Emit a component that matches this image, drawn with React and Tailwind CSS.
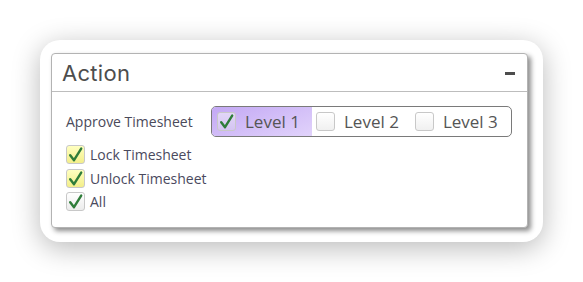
import React from "react";

function Check({ variant = "white" }) {
  const bg =
    variant === "yellow"
      ? "bg-[linear-gradient(180deg,#ffffc0,#f3ee8a)]"
      : variant === "purple"
      ? "bg-[linear-gradient(180deg,#e2d6f7,#d4c4f2)]"
      : "bg-[linear-gradient(180deg,#ffffff,#ececec)]";
  return (
    <span
      className={`relative inline-flex h-[19px] w-[19px] shrink-0 items-center justify-center rounded-[3px] border border-[#c8c8c8] ${bg}`}
    >
      <svg width="19" height="19" viewBox="0 0 19 19" className="absolute left-[-1px] top-[-1px]">
        <path d="M4.2 10.2 L8 15.2 L15.2 3.6" fill="none" stroke="#2f7d3a" strokeWidth="2.4" strokeLinecap="round" strokeLinejoin="round" />
      </svg>
    </span>
  );
}

function Empty() {
  return (
    <span className="inline-block h-[19px] w-[19px] shrink-0 rounded-[3px] border border-[#c8c8c8] bg-[linear-gradient(180deg,#ffffff,#f0f0f0)]" />
  );
}

export default function App() {
  return (
    <div className="h-[282px] w-[583px] bg-white pl-[40px] pt-[40px] font-['Open_Sans',sans-serif]">
      <div className="h-[202px] w-[503px] rounded-[20px] bg-white pb-[14px] pl-[11px] pr-[15px] pt-[13px] shadow-[0_6px_28px_rgba(0,0,0,0.28)]">
        <div className="h-[175px] w-[477px] rounded-[4px] border border-[#b3b3b3] bg-white shadow-[3px_3px_5px_rgba(0,0,0,0.45)]">
          <div className="flex h-[38px] items-center justify-between border-b border-[#bdbdbd] pl-[10px] pr-[12px]">
            <span className="font-['Inter',sans-serif] text-[22px] leading-none text-[#4d4d4d] tracking-[0.3px]">Action</span>
            <span className="mt-[1px] block h-[3px] w-[10px] bg-[#4d4d4d]" />
          </div>
          <div className="pl-[14px] pt-[14px]">
            <div className="flex items-center">
              <span className="w-[145px] text-[14px] text-[#4a4a5a]">Approve Timesheet</span>
              <div className="flex h-[31px] w-[301px] items-center overflow-hidden rounded-[5px] border border-[#7a7a7a]">
                <div className="flex h-full w-[100px] items-center gap-[9px] bg-[linear-gradient(160deg,#c3a8f4,#e1d3fb)] pl-[5px]">
                  <Check variant="purple" />
                  <span className="text-[17px] text-[#555]">Level 1</span>
                </div>
                <div className="flex h-full items-center gap-[9px] pl-[4px]">
                  <Empty />
                  <span className="text-[17px] text-[#555]">Level 2</span>
                </div>
                <div className="flex h-full items-center gap-[9px] pl-[16px]">
                  <Empty />
                  <span className="text-[17px] text-[#555]">Level 3</span>
                </div>
              </div>
            </div>
            <div className="mt-[8px] flex flex-col gap-[4.5px]">
              <div className="flex items-center gap-[5px]">
                <Check variant="yellow" />
                <span className="text-[14px] leading-[19px] text-[#4a4a5e]">Lock Timesheet</span>
              </div>
              <div className="flex items-center gap-[5px]">
                <Check variant="yellow" />
                <span className="text-[14px] leading-[19px] text-[#4a4a5e]">Unlock Timesheet</span>
              </div>
              <div className="flex items-center gap-[5px]">
                <Check />
                <span className="text-[14px] leading-[19px] text-[#4a4a5e]">All</span>
              </div>
            </div>
          </div>
        </div>
      </div>
    </div>
  );
}
